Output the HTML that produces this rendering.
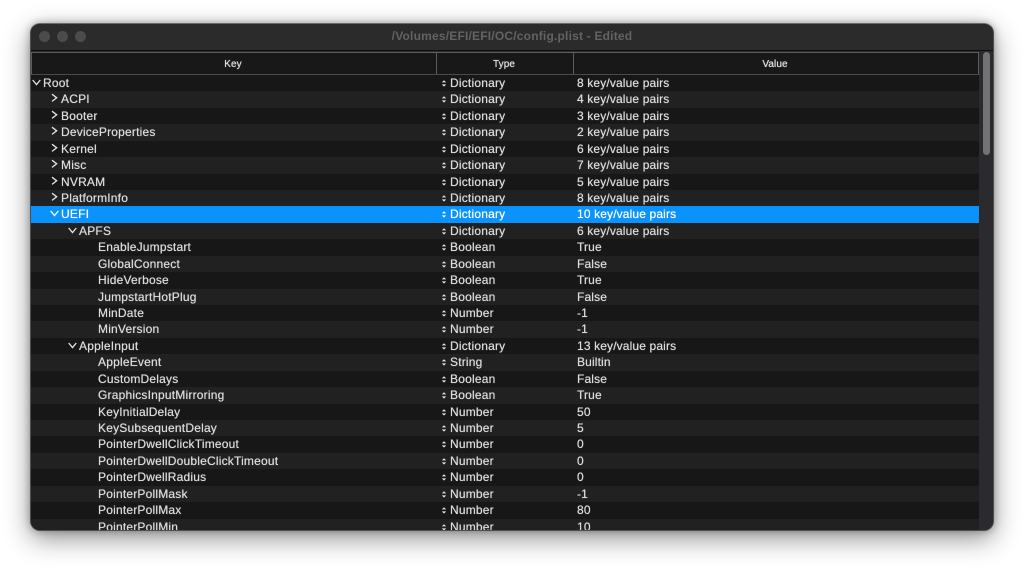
<!DOCTYPE html>
<html><head><meta charset="utf-8"><style>
html,body{margin:0;padding:0;background:#fff;width:1024px;height:569px;overflow:hidden}
*{box-sizing:border-box}
body{font-family:"Liberation Sans",sans-serif;position:relative}
#win{position:absolute;left:30px;top:23px;width:964px;height:508px;border-radius:10px;background:#2a2a2c;box-shadow:0 8px 26px rgba(0,0,0,.42),0 0 8px rgba(0,0,0,.3);overflow:hidden;border:1px solid #4e4e4e;border-top-color:#6a6a6a}
#title{position:absolute;left:0;top:0;width:100%;height:27px;background:#2b2b2b;border-bottom:1px solid #0f0f0f}
.dot{position:absolute;top:7px;width:11px;height:11px;border-radius:50%;background:#4c4c4c}
#tt{position:absolute;left:0;top:5px;width:100%;text-align:center;font-size:12px;letter-spacing:.2px;font-weight:bold;color:#636363;white-space:nowrap;line-height:15px;filter:blur(.3px)}
#head{position:absolute;left:0;top:28px;width:948px;height:23px;background:#181818;border:1px solid #5c5c5c;border-bottom:1px solid #4a4a4a;font-size:10px;color:#e0e0e0;filter:blur(.3px);text-shadow:0 0 .7px #e0e0e0}
#head span{position:absolute;top:5px;line-height:14px;letter-spacing:.1px;transform:translateX(-50%)}
#head i{position:absolute;top:0;bottom:0;width:1.5px;background:#5c5c5c}
#rows{position:absolute;left:0;top:51px;width:948px;height:456px;overflow:hidden;background:#181818}
.r{position:absolute;left:0;width:948px;height:16.43px;font-size:12px;letter-spacing:.2px;color:#dcdcdc;background:#171717;white-space:nowrap;filter:blur(.3px);text-shadow:0 0 .6px #dcdcdc}
.r.o{background:#212121}
.r.s{background:#0a93ff;color:#fff;text-shadow:0 0 .6px #fff}
.r span{position:absolute;top:1px;line-height:14px}
.t{left:419px}.v{left:546px;letter-spacing:.14px}
.r svg{position:absolute;top:0;left:0}
#sb{position:absolute;left:948px;top:28px;width:15px;height:480px;background:#2b2b2f}
#th{position:absolute;left:4px;top:0;width:7px;height:103px;border-radius:4px;background:#737373}
</style></head><body>
<div id="win">
<div id="title">
<div class="dot" style="left:8px"></div><div class="dot" style="left:26px"></div><div class="dot" style="left:44px"></div>
<div id="tt">/Volumes/EFI/EFI/OC/config.plist - Edited</div>
</div>
<div id="head"><span style="left:201px">Key</span><i style="left:403.5px"></i><span style="left:472px">Type</span><i style="left:540.5px"></i><span style="left:743px">Value</span></div>
<div id="rows"></div>
<div id="sb"><div id="th"></div></div>
</div>
<script>
var D=[["Root",0,1,"Dictionary","8 key/value pairs"],["ACPI",1,0,"Dictionary","4 key/value pairs"],["Booter",1,0,"Dictionary","3 key/value pairs"],["DeviceProperties",1,0,"Dictionary","2 key/value pairs"],["Kernel",1,0,"Dictionary","6 key/value pairs"],["Misc",1,0,"Dictionary","7 key/value pairs"],["NVRAM",1,0,"Dictionary","5 key/value pairs"],["PlatformInfo",1,0,"Dictionary","8 key/value pairs"],["UEFI",1,1,"Dictionary","10 key/value pairs"],["APFS",2,1,"Dictionary","6 key/value pairs"],["EnableJumpstart",3,-1,"Boolean","True"],["GlobalConnect",3,-1,"Boolean","False"],["HideVerbose",3,-1,"Boolean","True"],["JumpstartHotPlug",3,-1,"Boolean","False"],["MinDate",3,-1,"Number","-1"],["MinVersion",3,-1,"Number","-1"],["AppleInput",2,1,"Dictionary","13 key/value pairs"],["AppleEvent",3,-1,"String","Builtin"],["CustomDelays",3,-1,"Boolean","False"],["GraphicsInputMirroring",3,-1,"Boolean","True"],["KeyInitialDelay",3,-1,"Number","50"],["KeySubsequentDelay",3,-1,"Number","5"],["PointerDwellClickTimeout",3,-1,"Number","0"],["PointerDwellDoubleClickTimeout",3,-1,"Number","0"],["PointerDwellRadius",3,-1,"Number","0"],["PointerPollMask",3,-1,"Number","-1"],["PointerPollMax",3,-1,"Number","80"],["PointerPollMin",3,-1,"Number","10"]];
var h="";
D.forEach(function(d,i){
var x=[12,30,48,67][d[1]];
var cx=x-6.5;
var c=d[0]=="UEFI"?"#fff":"#e4e4e4";
var arrow="";
if(d[2]==1)arrow='<path d="M'+(cx-3.8)+' 5L'+cx+' 9.6L'+(cx+3.8)+' 5" fill="none" stroke="'+c+'" stroke-width="1.3"/>';
if(d[2]==0)arrow='<path d="M'+(cx-2.5)+' 3.2L'+(cx+2.2)+' 6.8L'+(cx-2.5)+' 10.4" fill="none" stroke="'+c+'" stroke-width="1.3"/>';
var upd='<path d="M410.8 7.4L413 5.2L415.2 7.4ZM410.8 9.4L413 11.6L415.2 9.4Z" fill="'+c+'"/>';
var cl="r"+(i%2?" o":"")+(d[0]=="UEFI"?" s":"");
h+='<div class="'+cl+'" style="top:'+(i*16.43).toFixed(2)+'px"><svg width="440" height="16">'+arrow+upd+'</svg><span class="k" style="left:'+x+'px">'+d[0]+'</span><span class="t">'+d[3]+'</span><span class="v">'+d[4]+'</span></div>';
});
document.getElementById("rows").innerHTML=h;
</script>
</body></html>
